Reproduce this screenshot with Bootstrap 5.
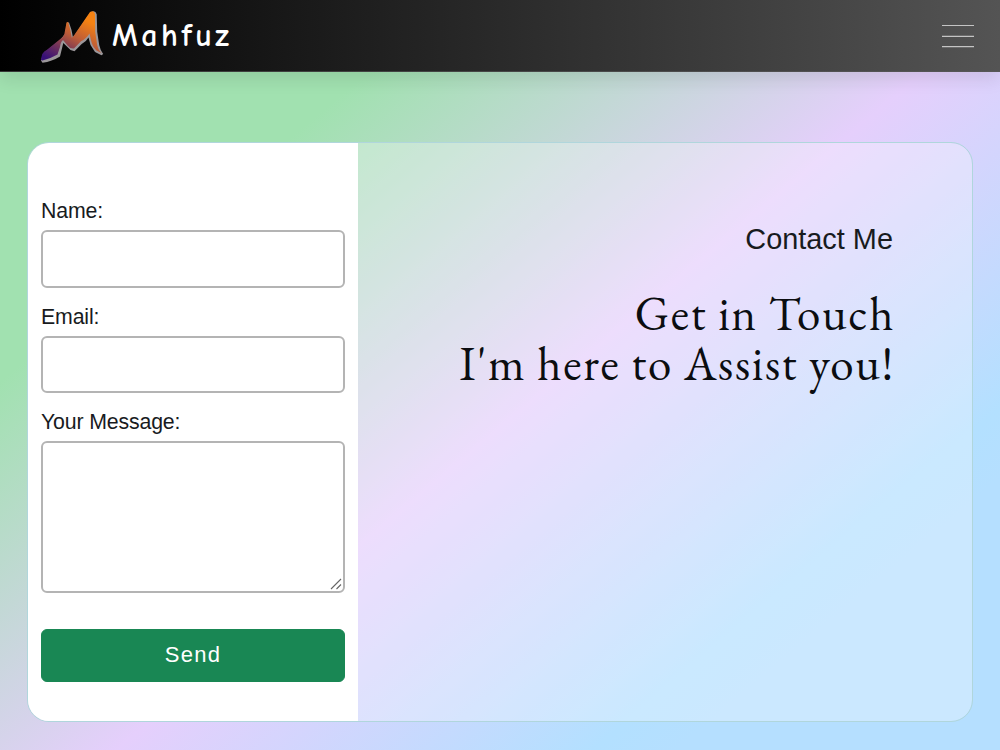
<!DOCTYPE html>
<html lang="en">
  <head>
    <meta charset="UTF-8" />
    <meta name="viewport" content="width=device-width, initial-scale=1.0" />
    <title>Mahfuz - Contact</title>
    <!-- Bootstrap CSS -->
    <link
      href="https://cdn.jsdelivr.net/npm/bootstrap@5.3.0/dist/css/bootstrap.min.css"
      rel="stylesheet"
    />
    <style>
      body {
        height: 750px;
        overflow: hidden;
        font-family: "Liberation Sans", Arial, sans-serif;
        color: #181b1e;
        background: linear-gradient(140deg, #a1e1b0 24%, #e5cffc 53.3%, #b3e0ff 78.5%, #b5dfff 83%);
      }
      .site-nav {
        height: 72px;
        padding: 0 26px 0 40px;
        background: linear-gradient(90deg, #000, #545454);
        border-bottom: 1px solid rgba(90, 90, 90, 0.6);
        box-shadow: 0 8px 16px rgba(0, 0, 0, 0.09);
      }
      .brand-name {
        margin-left: 6px;
        font-family: "Comic Neue", "Comic Sans MS", "Open Sans", sans-serif;
        font-size: 32px;
        font-weight: 700;
        letter-spacing: 3.5px;
        line-height: 1;
      }
      .menu-toggle svg {
        display: block;
      }
      .contact-box {
        height: 580px;
        margin: 70px 27px 0;
        border: 1px solid #b0d6dc;
        border-radius: 22px;
        background: rgba(255, 255, 255, 0.3);
        background-clip: padding-box;
      }
      .form-side {
        width: 330px;
        padding: 54.4px 13px 0;
      }
      .form-side label {
        height: 33px;
        font-size: 21.3px;
        line-height: 28px;
        letter-spacing: -0.15px;
      }
      .form-side .form-control {
        border: 2px solid #b4b4b4;
        border-radius: 6px;
      }
      .form-side input.form-control {
        height: 57.6px;
        margin-bottom: 14.6px;
      }
      .message-wrap {
        margin-bottom: 36px;
      }
      .message-wrap textarea.form-control {
        display: block;
        height: 152px;
        resize: none;
      }
      .resize-grip {
        position: absolute;
        right: 3px;
        bottom: 3px;
      }
      .send-btn {
        height: 53px;
        padding: 0 0 2px;
        font-size: 22px;
        letter-spacing: 1.3px;
        border-radius: 6px;
      }
      .text-side {
        padding: 78px 79px 0 0;
      }
      .contact-label {
        font-size: 28.9px;
        line-height: 36px;
        margin-bottom: 32px;
      }
      .headline {
        margin-right: -2px;
        font-family: Garamond, "EB Garamond", "Liberation Serif", serif;
        font-size: 47px;
        font-weight: 400;
        line-height: 50px;
        letter-spacing: 1.65px;
        color: #0b0d10;
      }
    </style>
  </head>
  <body>
    <nav class="site-nav d-flex align-items-center justify-content-between">
      <a class="d-flex align-items-center text-white text-decoration-none" href="#">
        <svg width="66" height="56" viewBox="0 0 66 56">
          <defs>
            <linearGradient id="flame" gradientUnits="userSpaceOnUse" x1="42" y1="3" x2="14" y2="54">
              <stop offset="0.1" stop-color="#f58212" />
              <stop offset="0.45" stop-color="#bd5c38" />
              <stop offset="0.72" stop-color="#743459" />
              <stop offset="1" stop-color="#371078" />
            </linearGradient>
          </defs>
          <path fill="#9b979a" d="M1 52.5 L3 46 L7 42.5 L20 32 L25 26 L27 14.5 L29 14.5 L31.5 22 L33 29.5 L50 5 Q55 1 56.7 6.3 L57.2 23.7 L59.2 37 Q60.5 43 63.2 46 L61.5 47.2 L55 44 L50.5 37 L48.5 29.5 Q46 34 41.7 36 L34.5 43.3 L30.5 42 L23.3 35 L20 48.5 Q12 53.5 2.5 54.8 Z" />
          <path fill="url(#flame)" d="M1 52 Q1.6 48 2.3 46 Q4 43 6.7 42 L20 31.3 Q23.5 29 24.3 26.3 L26.5 14.5 Q27.6 13.4 28.3 14.6 L30.3 22 L31.8 29.7 Q34 28 37 23 L50 4 Q54 1.5 55 6.3 L55.2 23.7 L57.2 37 Q58.5 42.5 61.5 45 L56.5 42.6 Q52 38 51.2 33 L49.5 25.5 Q46 31 41 33.3 L34 40.5 Q30 41 27.5 37.5 L23 32 Q20.5 34 20 39 L17.5 46.5 Q10 50.8 2.5 52.5 Z" />
        </svg>
        <span class="brand-name">Mahfuz</span>
      </a>
      <a class="menu-toggle" href="#" aria-label="Menu">
        <svg width="32" height="24" viewBox="0 0 32 24">
          <path d="M0 1.5h32M0 12.3h32M0 22.7h32" stroke="#c4c4c4" stroke-width="1.2" />
        </svg>
      </a>
    </nav>

    <main class="contact-box d-flex overflow-hidden">
      <form class="form-side bg-white flex-shrink-0">
        <label class="d-block" for="name">Name:</label>
        <input type="text" class="form-control" id="name" />
        <label class="d-block" for="email">Email:</label>
        <input type="email" class="form-control" id="email" />
        <label class="d-block" for="message">Your Message:</label>
        <div class="message-wrap position-relative">
          <textarea class="form-control" id="message"></textarea>
          <svg class="resize-grip" width="12" height="12" viewBox="0 0 12 12">
            <path d="M1 11 L11 1 M6.5 11 L11 6.5" stroke="#666" stroke-width="1.1" />
          </svg>
        </div>
        <button type="button" class="btn btn-success send-btn w-100">Send</button>
      </form>
      <section class="text-side flex-grow-1 text-end">
        <p class="contact-label">Contact Me</p>
        <h1 class="headline text-nowrap mb-0">Get in Touch<br />I'm here to Assist you!</h1>
      </section>
    </main>

    <!-- Bootstrap JS -->
    <script src="https://cdn.jsdelivr.net/npm/bootstrap@5.3.0/dist/js/bootstrap.bundle.min.js"></script>
  </body>
</html>
